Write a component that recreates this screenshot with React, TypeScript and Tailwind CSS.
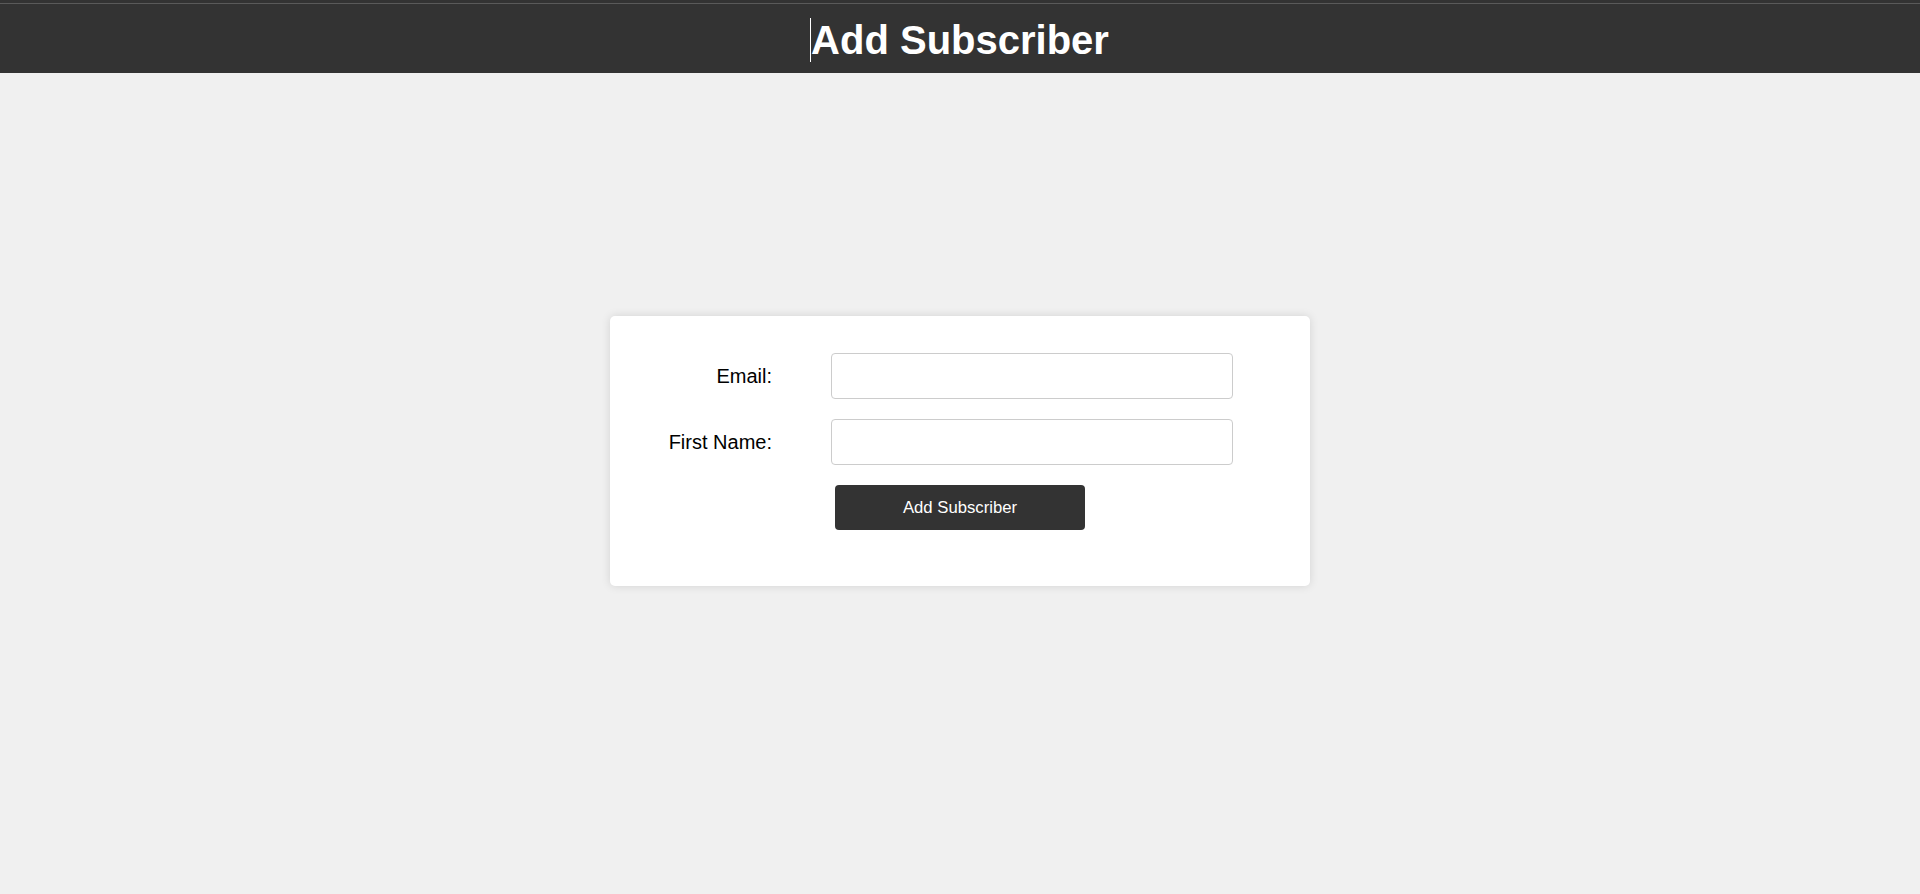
import React from 'react';

const App: React.FC = () => {
  return (
    <div className="min-h-[894px] bg-[#f0f0f0] font-['Liberation_Sans',Arial,sans-serif] text-black">
      <header className="h-[73px] bg-[#333333]">
        <div className="pt-[3px]">
          <div className="h-px bg-[#5a5a5a]" />
        </div>
        <h1 className="mt-[13px] text-center text-[40px] font-bold leading-[46px] text-white">
          <span className="relative">
            <span className="absolute left-[-1px] top-0 h-[44px] w-px bg-white" />
            Add Subscriber
          </span>
        </h1>
      </header>

      <main className="flex justify-center pt-[243px]">
        <form
          className="flex h-[270px] w-[700px] flex-col rounded-[5px] bg-white pl-[25px] pt-[37px] shadow-[0_0_10px_rgba(0,0,0,0.12)]"
          onSubmit={(e) => e.preventDefault()}
        >
          <div className="flex items-center">
            <label className="w-[137px] text-right text-[20px]">Email:</label>
            <input
              type="email"
              className="ml-[59px] h-[46px] w-[402px] rounded-[4px] border border-[#cccccc] bg-white px-3 text-[17px] outline-none"
            />
          </div>
          <div className="mt-[20px] flex items-center">
            <label className="w-[137px] text-right text-[20px]">First Name:</label>
            <input
              type="text"
              className="ml-[59px] h-[46px] w-[402px] rounded-[4px] border border-[#cccccc] bg-white px-3 text-[17px] outline-none"
            />
          </div>
          <div className="mt-[20px] flex">
            <button
              type="submit"
              className="ml-[200px] h-[45px] w-[250px] rounded-[4px] bg-[#333333] text-[16.7px] text-white"
            >
              Add Subscriber
            </button>
          </div>
        </form>
      </main>
    </div>
  );
};

export default App;
